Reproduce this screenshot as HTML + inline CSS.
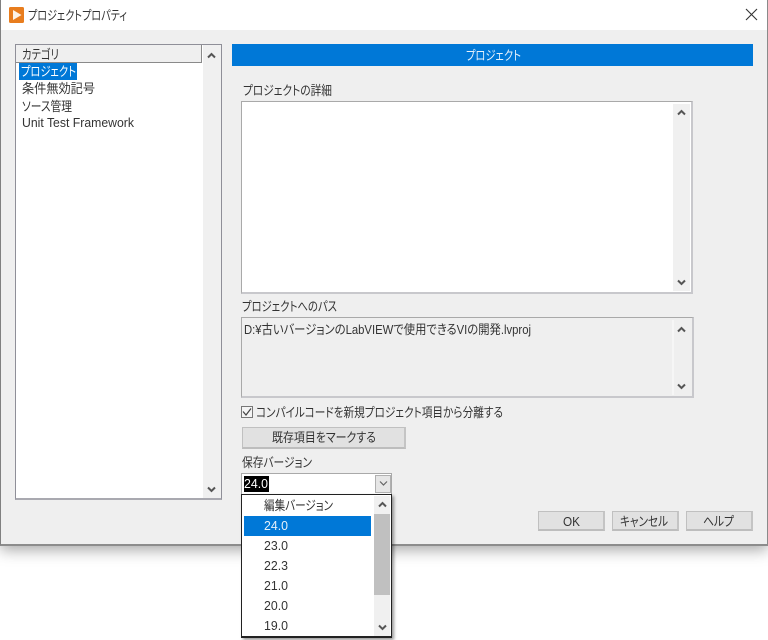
<!DOCTYPE html>
<html lang="ja">
<head>
<meta charset="utf-8">
<title>プロジェクトプロパティ</title>
<style>
html,body{margin:0;padding:0;width:768px;height:640px;overflow:hidden;background:#fff}
body{position:relative;font-family:"Liberation Sans","Noto Sans CJK JP",sans-serif;font-size:12px;color:#333}
div,svg{position:absolute;box-sizing:border-box}
.box{border:1px solid #a9a9a9;border-bottom:2px solid #c8c8cc;border-right:2px solid #c8c8cc}
.sb{background:#f0f0f0}
.btn{background:#e1e1e1;border:1px solid #c0c0c0;border-bottom:2px solid #bdbdbd;border-right:2px solid #c4c4c4}
#txt text{font-family:"Liberation Sans","Noto Sans CJK JP",sans-serif;font-size:13px;fill:#333;font-feature-settings:"palt";white-space:pre}
</style>
</head>
<body>
<!-- window shadow and frame -->
<div style="left:0;top:0;width:768px;height:546px;background:#efefef;border-left:1px solid #808080;border-right:1px solid #8a8a8a;border-bottom:2px solid #8c8c8c;box-shadow:0 4px 14px rgba(0,0,0,.35)"></div>
<div style="left:1px;top:0;width:766px;height:30px;background:#fff"></div>

<!-- title icon and close -->
<svg style="left:9px;top:7px" width="15" height="16" viewBox="0 0 15 16"><rect x="0" y="0" width="15" height="16" rx="1.5" fill="#e87d1e"/><path d="M4 3 L12.5 8 L4 13 Z" fill="#fdf3e7"/></svg>
<svg style="left:745px;top:8px" width="13" height="13" viewBox="0 0 13 13"><path d="M1 1 L12 12 M12 1 L1 12" stroke="#333" stroke-width="1.1" fill="none"/></svg>

<!-- category list -->
<div style="left:15px;top:44px;width:207px;height:456px;background:#fff;border:1px solid #8f8f98;border-bottom:2px solid #a9a9b0"></div>
<div style="left:16px;top:45px;width:186px;height:18px;background:#efefef;border-right:1px solid #8a8a8a;border-bottom:1px solid #8a8a8a"></div>
<div class="sb" style="left:203px;top:45px;width:18px;height:453px"></div>
<svg style="left:207px;top:52px" width="9" height="7" viewBox="0 0 9 7"><path d="M1 5.5 L4.5 2 L8 5.5" stroke="#555" stroke-width="2" fill="none"/></svg>
<svg style="left:207px;top:486px" width="9" height="7" viewBox="0 0 9 7"><path d="M1 1.5 L4.5 5 L8 1.5" stroke="#555" stroke-width="2" fill="none"/></svg>
<div style="left:19px;top:63px;width:58px;height:17px;background:#0078d7"></div>

<!-- blue header -->
<div style="left:232px;top:44px;width:521px;height:22px;background:#0078d7"></div>

<!-- description -->
<div class="box" style="left:241px;top:101px;width:452px;height:193px;background:#fff"></div>
<div class="sb" style="left:673px;top:104px;width:17px;height:187px"></div>
<svg style="left:677px;top:109px" width="9" height="7" viewBox="0 0 9 7"><path d="M1 5.5 L4.5 2 L8 5.5" stroke="#555" stroke-width="2" fill="none"/></svg>
<svg style="left:677px;top:279px" width="9" height="7" viewBox="0 0 9 7"><path d="M1 1.5 L4.5 5 L8 1.5" stroke="#555" stroke-width="2" fill="none"/></svg>

<!-- path -->
<div class="box" style="left:241px;top:317px;width:453px;height:81px;background:#efefef"></div>
<div style="left:672px;top:320px;width:2px;height:75px;background:#f6f6f6"></div>
<svg style="left:677px;top:326px" width="9" height="7" viewBox="0 0 9 7"><path d="M1 5.5 L4.5 2 L8 5.5" stroke="#555" stroke-width="2" fill="none"/></svg>
<svg style="left:677px;top:383px" width="9" height="7" viewBox="0 0 9 7"><path d="M1 1.5 L4.5 5 L8 1.5" stroke="#555" stroke-width="2" fill="none"/></svg>

<!-- checkbox -->
<div style="left:241px;top:406px;width:12px;height:12px;background:#f4f4f4;border:1px solid #777"></div>
<svg style="left:242px;top:407px" width="10" height="10" viewBox="0 0 10 10"><path d="M1 4.5 L4 8 L9 1.5" stroke="#444" stroke-width="1.2" fill="none"/></svg>

<!-- mark button -->
<div class="btn" style="left:242px;top:427px;width:164px;height:22px"></div>

<!-- save version -->
<div style="left:241px;top:473px;width:151px;height:22px;background:#fff;border:1px solid #a9a9a9"></div>
<div style="left:244px;top:476px;width:25px;height:16px;background:#000"></div>
<div style="left:375px;top:475px;width:16px;height:18px;background:#e6e6e6;border:1px solid #b0b0b0"></div>
<svg style="left:379px;top:480px" width="9" height="7" viewBox="0 0 9 7"><path d="M1 1.5 L4.5 5 L8 1.5" stroke="#666" stroke-width="1.2" fill="none"/></svg>

<!-- bottom buttons -->
<div class="btn" style="left:538px;top:511px;width:67px;height:20px"></div>
<div class="btn" style="left:612px;top:511px;width:67px;height:20px"></div>
<div class="btn" style="left:686px;top:511px;width:67px;height:20px"></div>

<!-- text beneath popup -->
<svg id="txt" style="left:0;top:0" width="768" height="640" viewBox="0 0 768 640">
<text x="28" y="20" textLength="99" lengthAdjust="spacingAndGlyphs">プロジェクトプロパティ</text>
<text x="22" y="59" textLength="37" lengthAdjust="spacingAndGlyphs">カテゴリ</text>
<text x="21" y="76" textLength="55" lengthAdjust="spacingAndGlyphs" style="fill:#fff">プロジェクト</text>
<text x="22" y="93" textLength="73" lengthAdjust="spacingAndGlyphs">条件無効記号</text>
<text x="22" y="111" textLength="50" lengthAdjust="spacingAndGlyphs">ソース管理</text>
<text x="22" y="127" textLength="112" lengthAdjust="spacingAndGlyphs">Unit Test Framework</text>
<text x="466" y="60" textLength="55" lengthAdjust="spacingAndGlyphs" style="fill:#e8f2fb">プロジェクト</text>
<text x="243" y="95" textLength="89" lengthAdjust="spacingAndGlyphs">プロジェクトの詳細</text>
<text x="242" y="311" textLength="95" lengthAdjust="spacingAndGlyphs">プロジェクトへのパス</text>
<text x="244" y="334" textLength="287" lengthAdjust="spacingAndGlyphs">D:¥古いバージョンのLabVIEWで使用できるVIの開発.lvproj</text>
<text x="256" y="417" textLength="247" lengthAdjust="spacingAndGlyphs">コンパイルコードを新規プロジェクト項目から分離する</text>
<text x="272" y="442" textLength="104" lengthAdjust="spacingAndGlyphs">既存項目をマークする</text>
<text x="242" y="467" textLength="70" lengthAdjust="spacingAndGlyphs">保存バージョン</text>
<text x="244" y="488" textLength="24" lengthAdjust="spacingAndGlyphs" style="fill:#fff">24.0</text>
<text x="563" y="526" textLength="17" lengthAdjust="spacingAndGlyphs">OK</text>
<text x="620" y="526" textLength="48" lengthAdjust="spacingAndGlyphs">キャンセル</text>
<text x="703" y="526" textLength="31" lengthAdjust="spacingAndGlyphs">ヘルプ</text>
</svg>

<!-- popup -->
<div style="left:241px;top:494px;width:151px;height:144px;background:#fff;border:1px solid #222;border-bottom:2px solid #222;box-shadow:2px 2px 3px rgba(0,0,0,.4)"></div>
<div class="sb" style="left:374px;top:496px;width:16px;height:140px"></div>
<div style="left:374px;top:514px;width:16px;height:81px;background:#c0c0c0"></div>
<svg style="left:378px;top:501px" width="9" height="7" viewBox="0 0 9 7"><path d="M1 5.5 L4.5 2 L8 5.5" stroke="#555" stroke-width="2" fill="none"/></svg>
<svg style="left:378px;top:624px" width="9" height="7" viewBox="0 0 9 7"><path d="M1 1.5 L4.5 5 L8 1.5" stroke="#555" stroke-width="2" fill="none"/></svg>
<div style="left:244px;top:516px;width:127px;height:20px;background:#0078d7"></div>
<svg id="txt2" style="left:0;top:0;font-family:'Liberation Sans','Noto Sans CJK JP',sans-serif;font-size:13px;fill:#333;font-feature-settings:'palt'" width="768" height="640" viewBox="0 0 768 640">
<text x="264" y="510" textLength="69" lengthAdjust="spacingAndGlyphs">編集バージョン</text>
<text x="264" y="530" textLength="24" lengthAdjust="spacingAndGlyphs" style="fill:#e6f1fa">24.0</text>
<text x="264" y="550" textLength="24" lengthAdjust="spacingAndGlyphs">23.0</text>
<text x="264" y="570" textLength="24" lengthAdjust="spacingAndGlyphs">22.3</text>
<text x="264" y="590" textLength="24" lengthAdjust="spacingAndGlyphs">21.0</text>
<text x="264" y="610" textLength="24" lengthAdjust="spacingAndGlyphs">20.0</text>
<text x="264" y="630" textLength="24" lengthAdjust="spacingAndGlyphs">19.0</text>
</svg>
</body>
</html>
